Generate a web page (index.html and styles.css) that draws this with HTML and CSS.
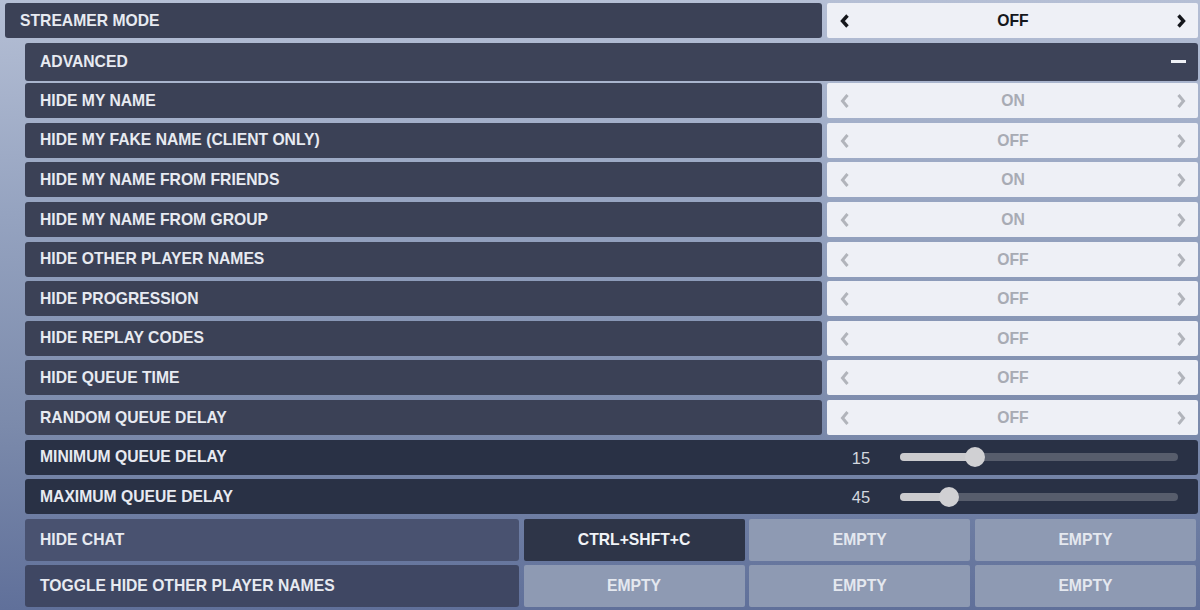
FILE: index.html
```html
<!DOCTYPE html>
<html lang="en">
<head>
<meta charset="utf-8">
<title>Streamer Mode</title>
<link rel="stylesheet" href="styles.css">
</head>
<body>
<div class="page">
  <div class="main-row">
    <div class="label main-label">STREAMER MODE</div>
    <div class="value active">
      <svg class="chev" viewBox="0 0 10 14"><polyline points="7.5,1.5 2.5,7 7.5,12.5"/></svg>
      <span class="val-text">OFF</span>
      <svg class="chev" viewBox="0 0 10 14"><polyline points="2.5,1.5 7.5,7 2.5,12.5"/></svg>
    </div>
  </div>

  <div class="group">
    <div class="label header"><span>ADVANCED</span><span class="minus"></span></div>

    <div class="toggle-row">
      <div class="label">HIDE MY NAME</div>
      <div class="value"><svg class="chev" viewBox="0 0 10 14"><polyline points="7.5,1 2.5,7 7.5,13"/></svg><span class="val-text">ON</span><svg class="chev" viewBox="0 0 10 14"><polyline points="2.5,1 7.5,7 2.5,13"/></svg></div>
    </div>
    <div class="toggle-row">
      <div class="label">HIDE MY FAKE NAME (CLIENT ONLY)</div>
      <div class="value"><svg class="chev" viewBox="0 0 10 14"><polyline points="7.5,1 2.5,7 7.5,13"/></svg><span class="val-text">OFF</span><svg class="chev" viewBox="0 0 10 14"><polyline points="2.5,1 7.5,7 2.5,13"/></svg></div>
    </div>
    <div class="toggle-row">
      <div class="label">HIDE MY NAME FROM FRIENDS</div>
      <div class="value"><svg class="chev" viewBox="0 0 10 14"><polyline points="7.5,1 2.5,7 7.5,13"/></svg><span class="val-text">ON</span><svg class="chev" viewBox="0 0 10 14"><polyline points="2.5,1 7.5,7 2.5,13"/></svg></div>
    </div>
    <div class="toggle-row">
      <div class="label">HIDE MY NAME FROM GROUP</div>
      <div class="value"><svg class="chev" viewBox="0 0 10 14"><polyline points="7.5,1 2.5,7 7.5,13"/></svg><span class="val-text">ON</span><svg class="chev" viewBox="0 0 10 14"><polyline points="2.5,1 7.5,7 2.5,13"/></svg></div>
    </div>
    <div class="toggle-row">
      <div class="label">HIDE OTHER PLAYER NAMES</div>
      <div class="value"><svg class="chev" viewBox="0 0 10 14"><polyline points="7.5,1 2.5,7 7.5,13"/></svg><span class="val-text">OFF</span><svg class="chev" viewBox="0 0 10 14"><polyline points="2.5,1 7.5,7 2.5,13"/></svg></div>
    </div>
    <div class="toggle-row">
      <div class="label">HIDE PROGRESSION</div>
      <div class="value"><svg class="chev" viewBox="0 0 10 14"><polyline points="7.5,1 2.5,7 7.5,13"/></svg><span class="val-text">OFF</span><svg class="chev" viewBox="0 0 10 14"><polyline points="2.5,1 7.5,7 2.5,13"/></svg></div>
    </div>
    <div class="toggle-row">
      <div class="label">HIDE REPLAY CODES</div>
      <div class="value"><svg class="chev" viewBox="0 0 10 14"><polyline points="7.5,1 2.5,7 7.5,13"/></svg><span class="val-text">OFF</span><svg class="chev" viewBox="0 0 10 14"><polyline points="2.5,1 7.5,7 2.5,13"/></svg></div>
    </div>
    <div class="toggle-row">
      <div class="label">HIDE QUEUE TIME</div>
      <div class="value"><svg class="chev" viewBox="0 0 10 14"><polyline points="7.5,1 2.5,7 7.5,13"/></svg><span class="val-text">OFF</span><svg class="chev" viewBox="0 0 10 14"><polyline points="2.5,1 7.5,7 2.5,13"/></svg></div>
    </div>
    <div class="toggle-row">
      <div class="label">RANDOM QUEUE DELAY</div>
      <div class="value"><svg class="chev" viewBox="0 0 10 14"><polyline points="7.5,1 2.5,7 7.5,13"/></svg><span class="val-text">OFF</span><svg class="chev" viewBox="0 0 10 14"><polyline points="2.5,1 7.5,7 2.5,13"/></svg></div>
    </div>

    <div class="slider-row">
      <span class="slider-label">MINIMUM QUEUE DELAY</span>
      <span class="num">15</span>
      <div class="track"><div class="fill" style="width:27%"><span class="knob"></span></div></div>
    </div>
    <div class="slider-row">
      <span class="slider-label">MAXIMUM QUEUE DELAY</span>
      <span class="num">45</span>
      <div class="track"><div class="fill" style="width:17.6%"><span class="knob"></span></div></div>
    </div>

    <div class="key-row">
      <div class="label key-label first">HIDE CHAT</div>
      <div class="key bound">CTRL+SHFT+C</div>
      <div class="key">EMPTY</div>
      <div class="key">EMPTY</div>
    </div>
    <div class="key-row">
      <div class="label key-label">TOGGLE HIDE OTHER PLAYER NAMES</div>
      <div class="key">EMPTY</div>
      <div class="key">EMPTY</div>
      <div class="key">EMPTY</div>
    </div>
  </div>
</div>
</body>
</html>
```

FILE: styles.css
```css
html, body {
  margin: 0;
  padding: 0;
}

body {
  width: 1200px;
  height: 610px;
  overflow: hidden;
  background: linear-gradient(to bottom, #b5bfd5 0%, #95a3c0 35%, #7b8aab 70%, #60709a 100%);
  font-family: "Liberation Sans", Arial, sans-serif;
  font-weight: bold;
  font-size: 15.7px;
  color: #e7eaf1;
}

.page {
  padding: 3px 2px 0 5px;
  display: flex;
  flex-direction: column;
}

.label {
  background: #3b4156;
  border-radius: 3px;
  display: flex;
  align-items: center;
  padding-left: 15px;
  white-space: nowrap;
}

.main-row {
  display: grid;
  grid-template-columns: 817px 1fr;
  column-gap: 5px;
  height: 35px;
}

.value {
  background: #eef0f6;
  border-radius: 2px;
  display: flex;
  align-items: center;
  justify-content: space-between;
  padding: 1px 12px 0 13px;
  color: #a8abb4;
}

.val-text {
  flex: 1;
  text-align: center;
}

.chev {
  width: 10px;
  height: 14px;
  flex: none;
}

.chev polyline {
  fill: none;
  stroke: #b1b4bb;
  stroke-width: 3;
  stroke-linecap: butt;
  stroke-linejoin: miter;
}

.value.active {
  padding-top: 0;
  color: #15171c;
}

.value.active .chev polyline {
  stroke: #15171c;
  stroke-width: 3.4;
}

.group {
  margin: 5px 0 0 20px;
  display: flex;
  flex-direction: column;
  gap: 4.6px;
}

.header {
  height: 37.7px;
  justify-content: space-between;
  margin-bottom: -2px;
  background: #3d4358;
}

.minus {
  width: 15px;
  height: 3px;
  background: #eff1f6;
  margin-right: 12px;
}

.toggle-row {
  display: grid;
  grid-template-columns: 797px 1fr;
  column-gap: 5px;
  height: 35px;
}

.slider-row {
  height: 35px;
  background: #293145;
  border-radius: 3px;
  display: flex;
  align-items: center;
  padding: 0 20px 0 15px;
}

.slider-label {
  flex: 1;
}

.num {
  width: 40px;
  text-align: center;
  margin-right: 19px;
  padding-top: 2px;
  font-weight: normal;
  font-size: 16.5px;
  color: #d3d7df;
}

.track {
  width: 278px;
  height: 8px;
  border-radius: 4px;
  background: #575d6c;
}

.fill {
  position: relative;
  height: 100%;
  border-radius: 4px;
  background: #cbcbce;
}

.knob {
  position: absolute;
  right: -10px;
  top: 50%;
  width: 20px;
  height: 20px;
  margin-top: -10px;
  border-radius: 50%;
  background: #d0d0d3;
}

.key-row {
  display: grid;
  grid-template-columns: 494px 1fr 1fr 1fr;
  column-gap: 4.5px;
  height: 41.7px;
  margin-right: 2px;
}

.key-label {
  background: #3f4763;
}

.key-label.first {
  background: #495270;
}

.key {
  background: #8e9ab3;
  border-radius: 2px;
  display: flex;
  align-items: center;
  justify-content: center;
  color: #e4e8ef;
}

.key.bound {
  background: #2e3548;
  color: #f1f3f7;
}
```
